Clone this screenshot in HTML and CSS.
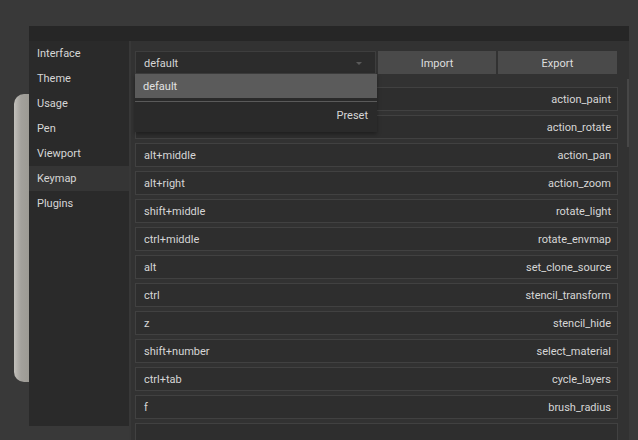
FILE: index.html
```html
<!DOCTYPE html>
<html lang="en">
<head>
    <meta charset="UTF-8">
    <title>Preferences - Keymap</title>
    <link rel="stylesheet" href="styles.css">
</head>
<body>

    <!-- object peeking out behind the window -->
    <div class="backdrop-object"></div>

    <div class="window">
        <div class="titlebar"></div>
        <div class="window-body">

            <!-- Category list -->
            <ul class="sidebar">
                <li>Interface</li>
                <li>Theme</li>
                <li>Usage</li>
                <li>Pen</li>
                <li>Viewport</li>
                <li class="active">Keymap</li>
                <li>Plugins</li>
            </ul>

            <!-- Keymap settings -->
            <div class="content">
                <div class="toolbar">
                    <div class="select">
                        <span>default</span>
                        <span class="arrow"></span>
                    </div>
                    <button class="btn">Import</button>
                    <button class="btn">Export</button>
                </div>

                <div class="dropdown">
                    <div class="option selected">default</div>
                    <div class="divider"></div>
                    <div class="option preset">Preset</div>
                </div>

                <div class="bindings">
                    <div class="binding"><span>left</span><span>action_paint</span></div>
                    <div class="binding"><span>middle</span><span>action_rotate</span></div>
                    <div class="binding"><span>alt+middle</span><span>action_pan</span></div>
                    <div class="binding"><span>alt+right</span><span>action_zoom</span></div>
                    <div class="binding"><span>shift+middle</span><span>rotate_light</span></div>
                    <div class="binding"><span>ctrl+middle</span><span>rotate_envmap</span></div>
                    <div class="binding"><span>alt</span><span>set_clone_source</span></div>
                    <div class="binding"><span>ctrl</span><span>stencil_transform</span></div>
                    <div class="binding"><span>z</span><span>stencil_hide</span></div>
                    <div class="binding"><span>shift+number</span><span>select_material</span></div>
                    <div class="binding"><span>ctrl+tab</span><span>cycle_layers</span></div>
                    <div class="binding"><span>f</span><span>brush_radius</span></div>
                    <div class="binding"></div>
                </div>

                <div class="scrollbar"></div>
            </div>
        </div>
    </div>

</body>
</html>
```

FILE: styles.css
```css
/* General */
body {
    margin: 0;
    width: 638px;
    height: 440px;
    overflow: hidden;
    position: relative;
    background: #393939;
    font-family: Roboto, "Liberation Sans", sans-serif;
    font-size: 11px;
    color: #d6d6d6;
    padding: 26px 0 0 29px;
    box-sizing: border-box;
}

/* Grey shape behind the window */
.backdrop-object {
    position: absolute;
    left: 14px;
    top: 94px;
    width: 20px;
    height: 288px;
    border-radius: 10px 0 0 10px;
    background: linear-gradient(90deg, #c2c0bb 0%, #a3a19c 35%, #98968f 100%);
}

/* Window */
.window {
    position: relative;
    width: 600px;
    display: flex;
    flex-direction: column;
}

.titlebar {
    height: 15px;
    background: #262626;
}

.window-body {
    display: flex;
    align-items: flex-start;
}

/* Sidebar */
.sidebar {
    list-style: none;
    margin: 0;
    padding: 0;
    width: 100px;
    height: 385px;
    background: #2a2a2a;
}

.sidebar li {
    height: 25px;
    line-height: 25px;
    padding-left: 8px;
}

.sidebar li.active {
    background: #353535;
}

/* Content */
.content {
    position: relative;
    flex: 1;
    height: 400px;
    background: #323232;
    border-left: 2px solid #383838;
    padding: 10px 0 0 4px;
}

.toolbar {
    display: grid;
    grid-template-columns: 241px 118px 119px;
    column-gap: 2px;
    height: 23px;
}

.select {
    display: flex;
    justify-content: space-between;
    align-items: center;
    padding: 1px 8px 0;
    background: #2c2c2c;
    border: 1px solid #3e3e3e;
    box-sizing: border-box;
}

.arrow {
    width: 0;
    height: 0;
    margin-right: 5px;
    border-left: 3px solid transparent;
    border-right: 3px solid transparent;
    border-top: 3px solid #5a5a5a;
}

.btn {
    font: inherit;
    color: #dedede;
    background: #4a4a4a;
    border: none;
    padding: 1px 0 0;
}

/* Open preset menu */
.dropdown {
    position: absolute;
    left: 4px;
    top: 33px;
    width: 242px;
    height: 58px;
    background: #2a2a2a;
    box-shadow: 0 2px 4px rgba(0, 0, 0, 0.35);
    z-index: 2;
}

.option {
    height: 24px;
    line-height: 26px;
    padding: 0 8px;
}

.option.selected {
    background: #5b5b5b;
    color: #e2e2e2;
}

.divider {
    height: 1px;
    margin-top: 3px;
    background: #5a5a5a;
}

.option.preset {
    text-align: right;
    padding-right: 9px;
    height: 28px;
    line-height: 28px;
}

/* Binding rows */
.bindings {
    display: flex;
    flex-direction: column;
    gap: 4px;
    width: 483px;
    margin-top: 13px;
}

.binding {
    display: flex;
    justify-content: space-between;
    align-items: center;
    height: 24px;
    padding: 0 6px 0 8px;
    background: #2e2e2e;
    border: 1px solid #414141;
    box-sizing: border-box;
}

.scrollbar {
    position: absolute;
    right: 0;
    top: 38px;
    width: 2px;
    height: 68px;
    background: #474747;
}
```
